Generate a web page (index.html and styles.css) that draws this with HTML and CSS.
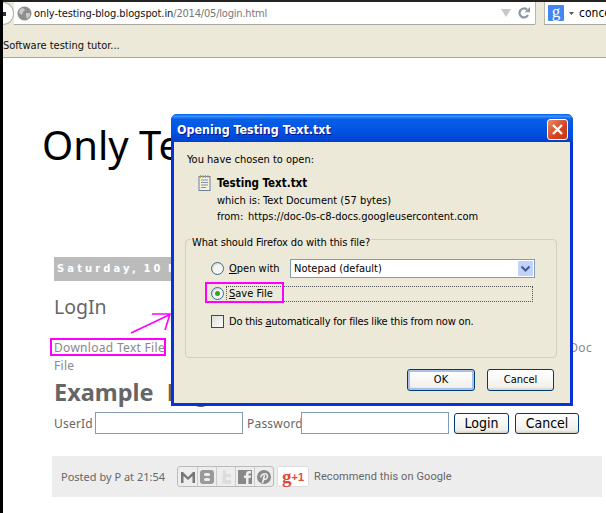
FILE: index.html
```html
<!DOCTYPE html>
<html lang="en">
<head>
<meta charset="utf-8">
<title>Opening Testing Text.txt</title>
<link rel="stylesheet" href="styles.css">
</head>
<body>
<div class="screen">
  <header class="chrome">
    <div class="navrow">
      <div class="backbtn"><span class="backdot"></span></div>
      <div class="urlbar">
        <svg class="globe" width="15" height="15" viewBox="0 0 15 15"><circle cx="7.5" cy="7.5" r="7" fill="#8f8f8f"/><path d="M3 3l3-1 2 2-2 2-1 3-3-2zM9 7l4 0 0 3-3 3-1-3z" fill="#c9c9c9"/></svg>
        <span class="host">only-testing-blog.blogspot.in</span><span class="path">/2014/05/login.html</span>
        <svg class="drop" width="10" height="8" viewBox="0 0 10 8"><path d="M0 0h10L5 8z" fill="#c3c9cd"/></svg>
        <svg class="reload" width="12" height="12" viewBox="0 0 12 12"><path d="M9 2.6A4.5 4.5 0 1 0 10 8" fill="none" stroke="#8d98a3" stroke-width="2.2"/><path d="M6.6 5.2H12V0z" fill="#8d98a3"/></svg>
      </div>
      <div class="searchbar">
        <span class="gbox">g</span>
        <svg class="gcaret" width="5" height="3" viewBox="0 0 5 3"><path d="M0 0h5L2.500 3z" fill="#555"/></svg>
        <span class="query">conce</span>
      </div>
    </div>
    <div class="tabrow">Software testing tutor...</div>
  </header>

  <main class="blog">
    <h1 class="blogtitle">Only Testing</h1>
    <div class="post">
      <div class="datebar">Saturday, 10 May 2014</div>
      <h2 class="posttitle">LogIn</h2>
      <div class="links"><span>Download Text File</span><span>Download Excel File Download Doc</span></div>
      <div class="linkwrap">File</div>
      <h2 class="example">Example Login Form</h2>
      <form class="loginform">
        <label class="fieldlabel uid">UserId</label><span class="webinput"></span>
        <label class="fieldlabel pw">Password</label><span class="webinput"></span>
        <span class="webbtn login">Login</span><span class="webbtn">Cancel</span>
      </form>
      <footer class="postfoot">
        <span>Posted by P at 21:54</span>
        <span class="share">
          <span class="si"><svg width="18" height="18" viewBox="0 0 18 18"><path d="M2 15V4h2l5 5 5-5h2v11h-2.500V8L9 12 4.500 8v7z" fill="#777"/></svg></span>
          <span class="si"><svg width="18" height="18" viewBox="0 0 18 18"><rect x="2" y="2" width="14" height="14" rx="3" fill="#999"/><rect x="6" y="5" width="6" height="3" rx="1.500" fill="#eee"/><rect x="6" y="10" width="6" height="3" rx="1.500" fill="#eee"/></svg></span>
          <span class="si"><svg width="18" height="18" viewBox="0 0 18 18"><path d="M6 2h3v4h5v3H9v3h5v4H8a3 3 0 0 1-3-3z" fill="#ddd"/></svg></span>
          <span class="si"><svg width="18" height="18" viewBox="0 0 18 18"><rect x="2" y="2" width="14" height="14" fill="#888"/><path d="M10 16V10H8V7.500h2V6a3 3 0 0 1 3-3h2v2.500h-1.500c-.7 0-1 .3-1 1V7.500H15l-.4 2.500h-2.100v6z" fill="#eee"/></svg></span>
          <span class="si"><svg width="18" height="18" viewBox="0 0 18 18"><circle cx="9" cy="9" r="7" fill="#888"/><path d="M7.500 15l2-8M6 9.500C5 6 12 4 12.500 8c.3 3-3 4.500-4 2.500" fill="none" stroke="#eee" stroke-width="1.600"/></svg></span>
        </span>
        <span class="gplus"><span class="gg">g</span><span class="plus">+1</span></span>
        <span class="rec">Recommend this on Google</span>
      </footer>
    </div>
  </main>

  <span class="mark mark-link"></span>
  <svg class="arrow" width="42" height="24" viewBox="0 0 42 24"><path d="M1 21L39 3M22 2H40L35 18" fill="none" stroke="#ff00ff" stroke-width="1.600"/></svg>

  <section class="dialog">
    <div class="titlebar">
      <span>Opening Testing Text.txt</span>
      <span class="close"><svg width="13" height="13" viewBox="0 0 13 13"><path d="M2 2l9 9M11 2l-9 9" stroke="#fff" stroke-width="2.400"/></svg></span>
    </div>
    <div class="dbody">
      <p class="intro">You have chosen to open:</p>
      <div class="fileinfo">
        <svg class="noteicon" width="13" height="16" viewBox="0 0 13 16"><rect x="1" y="1.500" width="11" height="14" fill="#f4f1dc" stroke="#6d7f9c"/><path d="M3 5h7M3 7.500h7M3 10h7M3 12.500h5" stroke="#7f8fa8"/><path d="M2.500 0v3M5 0v3M7.500 0v3M10 0v3" stroke="#c79a2a"/></svg>
        <div class="filetext">
          <div class="fname">Testing Text.txt</div>
          <div class="fmeta"><span class="k1">which is:</span>Text Document (57 bytes)</div>
          <div class="fmeta"><span class="k2">from:</span>https://doc-0s-c8-docs.googleusercontent.com</div>
        </div>
      </div>
      <fieldset class="group">
        <legend>What should Firefox do with this file?</legend>
        <div class="opts">
          <div class="optrow">
            <span class="radio"></span>
            <span class="optlabel"><u>O</u>pen with</span>
            <div class="select"><span>Notepad (default)</span><span class="selbtn"><svg width="11" height="8" viewBox="0 0 11 8"><path d="M1.500 1.500L5.500 5.500 9.500 1.500" fill="none" stroke="#44608f" stroke-width="2.200"/></svg></span></div>
          </div>
          <div class="optrow saverow">
            <span class="radio on"><span class="dot"></span></span>
            <div class="focusline"><u>S</u>ave File</div>
            <span class="mark mark-save"></span>
          </div>
          <div class="optrow autorow">
            <span class="check"></span>
            <span>Do this <u>a</u>utomatically for files like this from now on.</span>
          </div>
        </div>
      </fieldset>
      <div class="actions">
        <span class="xpbtn def">OK</span>
        <span class="xpbtn">Cancel</span>
      </div>
    </div>
  </section>
</div>
</body>
</html>
```
FILE: styles.css
```css
* { box-sizing: border-box; }
html, body { margin: 0; padding: 0; background: #fff; }
body { width: 606px; height: 513px; overflow: hidden; }

.screen {
  position: relative;
  width: 606px;
  height: 513px;
  overflow: hidden;
  border-left: 3px solid #000;
  background: #fff;
  font-family: "DejaVu Sans Condensed", "DejaVu Sans", sans-serif;
}

/* browser chrome */
.chrome { border-top: 2px solid #222; background: #ece9d8; border-bottom: 1px solid #aca899; height: 58px; }
.navrow { display: flex; height: 23px; }
.backbtn {
  width: 11px; height: 23px; background: #fff;
  border: 1px solid #b5b5ad; border-left: 0;
  border-radius: 0 12px 12px 0;
  display: flex; align-items: center;
}
.backdot { width: 3px; height: 4px; background: #333; }
.urlbar {
  flex: 0 0 522px;
  margin-right: 8px;
  background: #fff;
  border-bottom: 1px solid #a8a8a0;
  border-right: 1px solid #b8b8b0;
  border-radius: 0 0 2px 0;
  display: flex; align-items: center;
  padding-left: 3px;
  font-size: 11px;
  white-space: nowrap;
}
.globe { margin-right: 2px; flex: none; }
.host { color: #111; letter-spacing: -.08px; }
.path { color: #777; letter-spacing: -.2px; }
.drop { margin-left: auto; margin-right: 7px; }
.reload { margin-right: 5px; }
.searchbar {
  flex: 1;
  background: #fff;
  border-left: 1px solid #b8b8b0;
  border-bottom: 1px solid #a8a8a0;
  display: flex; align-items: center;
  padding-left: 3px;
  overflow: hidden;
  font-size: 12px;
  color: #000;
}
.gbox {
  width: 16px; height: 16px; background: #4285f4; color: #fff; border-radius: 1px;
  font: 17px/13px "Liberation Serif", serif; text-align: center; flex: none;
}
.gcaret { margin: 0 5px; flex: none; }
.tabrow { height: 32px; padding-top: 14px; font-size: 11px; line-height: 14px; color: #111; }

/* blog */
.blog { color: #666; font-family: "Noto Sans", sans-serif; }
.blogtitle { margin: 0; padding: 62px 0 0 39px; font: 400 40px/50px "Noto Sans", sans-serif; color: #000; white-space: nowrap; height: 199px; }
.post { padding-left: 49px; margin-left: 2px; }
.datebar {
  width: 400px; height: 24px;
  background: #bbb; color: #fff;
  font: 700 10px/24px "DejaVu Sans", sans-serif;
  letter-spacing: 3.100px; word-spacing: -2px; padding-left: 3px; white-space: nowrap;
}
.posttitle { margin: 13px 0 0; font: 400 19.500px/26px "Noto Sans", sans-serif; color: #666; }
.links { display: flex; justify-content: space-between; width: 538px; margin-top: 19px; font-size: 12px; line-height: 18px; letter-spacing: .3px; white-space: nowrap; overflow: hidden; color: #888; }
.linkwrap { font-size: 12px; line-height: 17px; letter-spacing: .3px; color: #888; }
.example { margin: 3px 0 0; font: 700 23.500px/30px "Noto Sans", sans-serif; color: #666; white-space: nowrap; word-spacing: 7px; }
.loginform { display: flex; align-items: center; height: 22px; margin-top: 5px; }
.fieldlabel { font-size: 12px; letter-spacing: .2px; color: #666; flex: none; }
.uid { width: 41px; }
.fieldlabel.pw { width: 54px; margin-left: 4px; }
.webinput { display: block; width: 148px; height: 22px; border: 1px solid #7f9db9; background: #fff; flex: none; }
.webbtn {
  width: 64px; height: 21px; margin-left: 6px;
  border: 1px solid #003c74; border-radius: 3px;
  background: linear-gradient(#fff, #f0f0ea 85%, #d6d0c5);
  font: 14px/19px "DejaVu Sans Condensed", sans-serif; color: #000; text-align: center; flex: none;
}
.webbtn.login { width: 55px; margin-left: 5px; }
.postfoot {
  display: flex; align-items: center; width: 550px; height: 41px; margin: 22px 0 0 -2px;
  padding-left: 9px; background: #ededed; font-size: 11px; color: #666; white-space: nowrap;
}
.share { display: flex; margin-left: 12px; border: 1px solid #bbb; border-radius: 3px; height: 21px; }
.si { width: 19px; display: flex; align-items: center; justify-content: center; border-left: 1px solid #ccc; }
.si:first-child { border-left: 0; }
.gplus {
  margin-left: 3px; width: 32px; height: 21px; background: #fff; border: 1px solid #ddd; border-radius: 2px;
  display: flex; align-items: center; justify-content: center; color: #dd4b39;
}
.gg { font: 700 19px/16px "Liberation Serif", serif; }
.plus { font: 700 11px/16px "Liberation Sans", sans-serif; }
.rec { margin-left: 5px; font-family: Roboto, sans-serif; font-size: 11px; letter-spacing: .1px; }

/* overlays */
.mark { position: absolute; border: 2px solid #ff00ff; }
.mark-link { left: 47px; top: 338px; width: 116px; height: 18px; }
.arrow { position: absolute; left: 127px; top: 312px; }

/* dialog */
.dialog {
  position: absolute; left: 168px; top: 114px; width: 402px; height: 292px;
  background: #ece9d8;
  border: 3px solid #0831d9;
  border-top: 0;
  border-radius: 6px 6px 0 0;
  font-size: 11px; color: #000;
}
.titlebar {
  height: 28px; margin: 0 -3px; padding: 3px 5px 0 6px;
  background: linear-gradient(#0058ee, #3a93ff 8%, #0a5fe6 18%, #0055e5 55%, #0046d5 90%, #0040c8);
  border-radius: 6px 6px 0 0;
  color: #fff; font: 700 12.400px/18px "DejaVu Sans Condensed", sans-serif;
  display: flex; justify-content: space-between; align-items: center;
  text-shadow: 1px 1px #0f1089;
}
.close {
  width: 21px; height: 21px; border: 1px solid #fff; border-radius: 3px;
  background: linear-gradient(135deg, #e88a6d, #d5431e 60%, #c23a12);
  display: flex; align-items: center; justify-content: center;
}
.dbody { padding: 11px 12px 0 13px; }
.intro { margin: 0; line-height: 14px; }
.fileinfo { display: flex; margin: 8px 0 0 11px; }
.noteicon { margin-right: 6px; flex: none; }
.filetext { line-height: 16px; white-space: nowrap; }
.fname { font-weight: 700; font-size: 11.500px; margin-bottom: 1px; }
.fmeta { margin-top: 3px; line-height: 13px; }
.k1 { display: inline-block; width: 46px; }
.k2 { display: inline-block; width: 31px; }
.group {
  margin: 5px 0 0 -2px; padding: 0; width: 372px; height: 130px;
  border: 1px solid #d0d0bf; border-radius: 4px; min-width: 0;
}
.group legend { padding: 8px 1px 0; margin-left: 5px; line-height: 14px; letter-spacing: -.1px; }
.opts { padding: 9px 0 0 25px; }
.optrow { display: flex; align-items: center; position: relative; }
.radio {
  width: 13px; height: 13px; border-radius: 50%; border: 1px solid #3d6a98; background: #f6f6f0;
  box-shadow: inset 1px 1px 1px #d7d6cc;
  flex: none; display: flex; align-items: center; justify-content: center;
}
.dot { width: 5px; height: 5px; border-radius: 50%; background: #2ba62b; }
.optlabel { margin-left: 5px; width: 61px; }
.select {
  width: 245px; height: 19px; background: #fff; border: 1px solid #7f9db9;
  display: flex; justify-content: space-between; align-items: center; padding: 0 1px 0 3px;
}
.selbtn { width: 15px; height: 15px; background: #c1d2fb; border-radius: 1px; display: flex; align-items: center; justify-content: center; }
.saverow { margin-top: 7px; height: 17px; }
.focusline { width: 307px; height: 16px; margin-left: 2px; border: 1px dotted #555; line-height: 14px; padding-left: 2px; }
.mark-save { left: -6px; top: -3px; width: 79px; height: 21px; }
.autorow { margin-top: 13px; gap: 5px; letter-spacing: -.2px; }
.check { width: 13px; height: 13px; border: 1px solid #1c5180; background: linear-gradient(135deg, #dcdcd7, #fff); flex: none; }
.actions { display: flex; justify-content: flex-end; gap: 12px; margin-top: 11px; padding-right: 4px; }
.xpbtn {
  width: 67px; height: 22px; border: 1px solid #003c74; border-radius: 3px;
  background: linear-gradient(#fff, #f2f1ea 85%, #d6d0c5);
  text-align: center; line-height: 20px;
}
.xpbtn.def { box-shadow: inset 0 0 0 2px #a9c0ea; width: 68px; }
```
